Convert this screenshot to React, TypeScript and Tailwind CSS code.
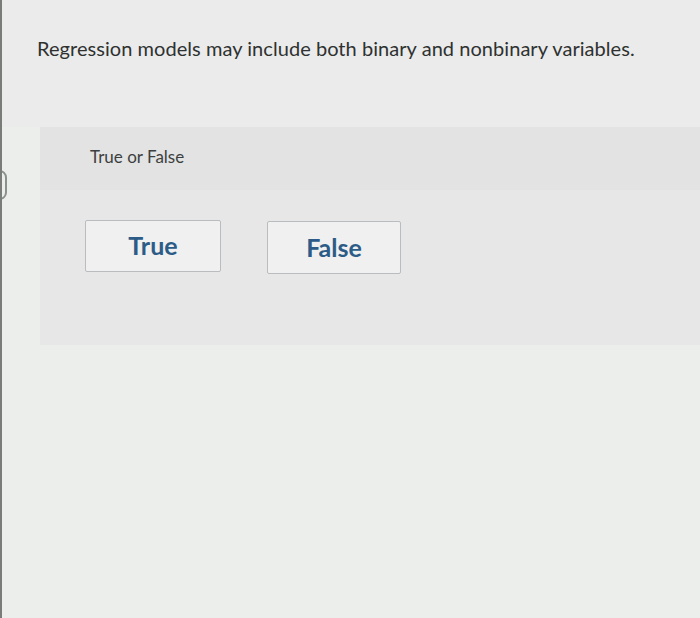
export default function App() {
  return (
    <div
      className="relative h-[618px] w-[700px] overflow-hidden border-l-2 border-[#7a7c7a] bg-[#eceeec] text-[#2f3131]"
      style={{ fontFamily: "Lato, 'Open Sans', sans-serif" }}
    >
      {/* question prompt */}
      <div className="bg-[#eaebea] pb-[67px] pl-[35px] pt-[36px]">
        <p className="text-[20px] leading-[24px] tracking-[0.05px]">
          Regression models may include both binary and nonbinary variables.
        </p>
      </div>

      {/* answer panel */}
      <div className="ml-[38px] w-[662px] bg-[#e6e7e6]">
        <div className="flex h-[63px] items-center bg-[#e2e3e2] pb-[3px] pl-[50px] text-[17px] text-[#3d3f3f]">
          True or False
        </div>
        <div className="flex h-[155px] items-start gap-[46px] pl-[45px] pt-[30px]">
          <button className="flex h-[52px] w-[136px] items-center justify-center rounded-[2px] border border-[#b9bdbf] bg-[#eff0ef] text-[25px] font-bold text-[#2c5b87]">
            True
          </button>
          <button className="mt-[1px] flex h-[53px] w-[134px] items-center justify-center rounded-[2px] border border-[#b9bdbf] bg-[#eff0ef] text-[25px] font-bold text-[#2c5b87]">
            False
          </button>
        </div>
      </div>

      {/* edge of a control peeking in at the left */}
      <div className="absolute left-[-10px] top-[170px] h-[30px] w-[15px] rounded-full border-2 border-[#8a918c]" />
    </div>
  );
}
